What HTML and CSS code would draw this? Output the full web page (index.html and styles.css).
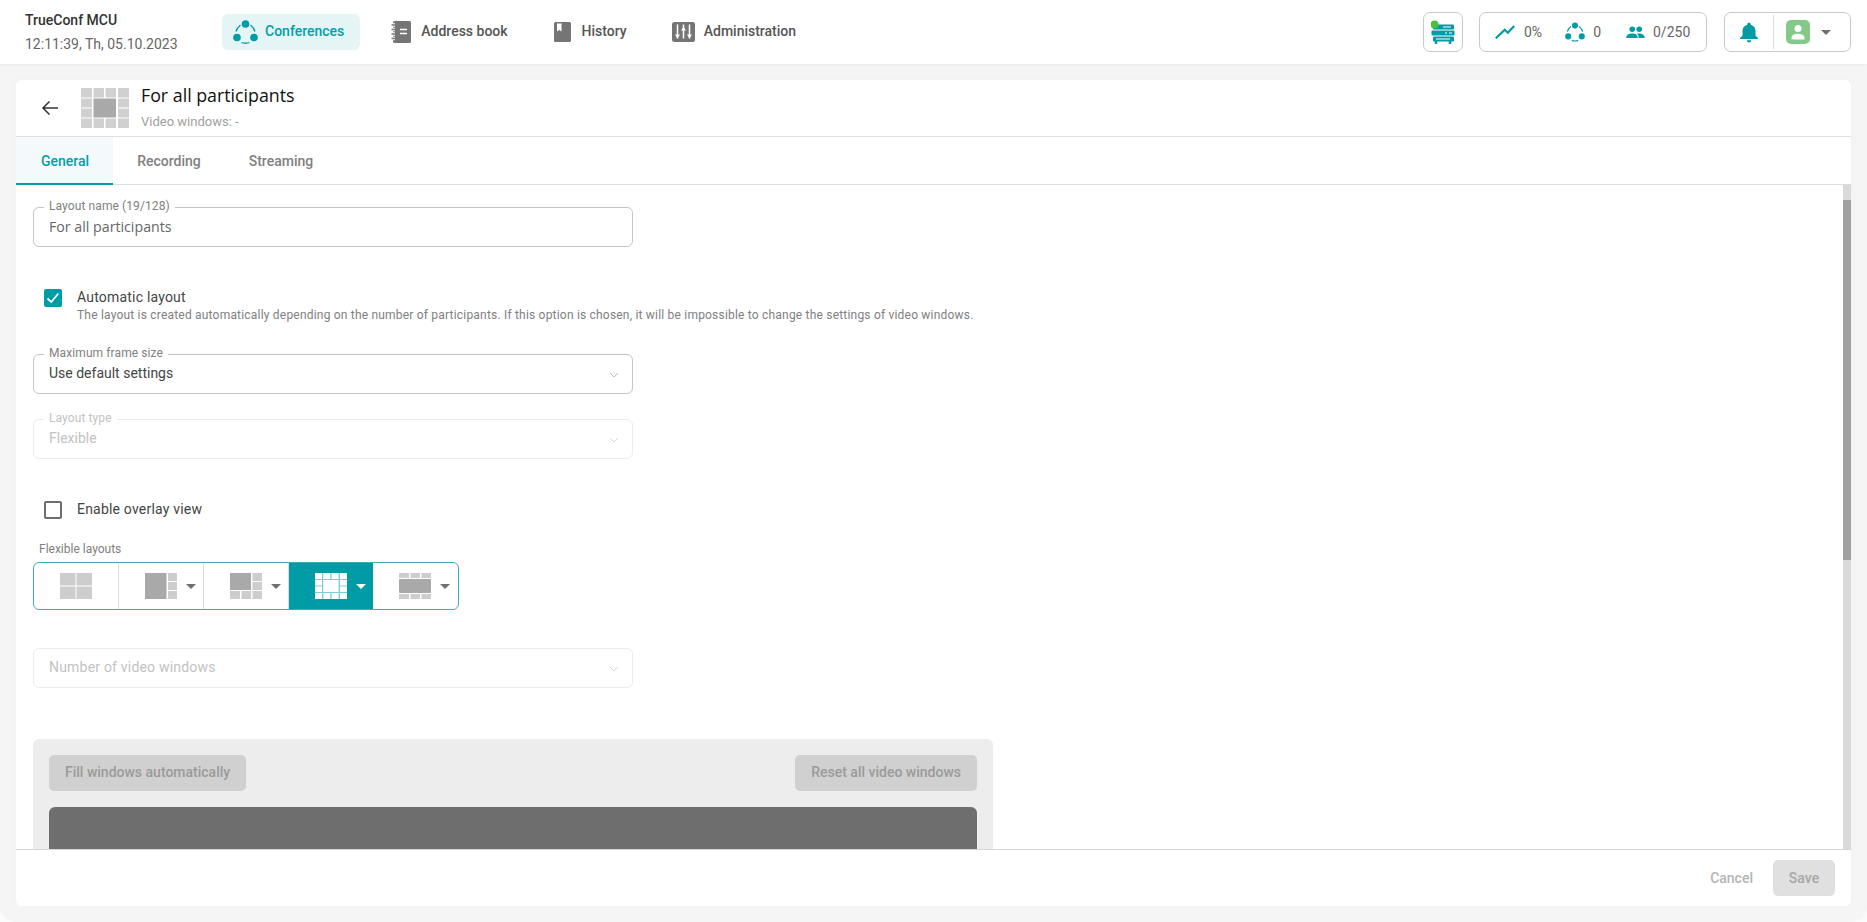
FILE: index.html
```html
<!DOCTYPE html>
<html lang="en">
<head>
<meta charset="utf-8">
<title>TrueConf MCU</title>
<link rel="stylesheet" href="styles.css">
</head>
<body>
<header class="topbar">
  <div class="brand">
    <div class="brand-name">TrueConf MCU</div>
    <div class="brand-time">12:11:39, Th, 05.10.2023</div>
  </div>
  <nav class="nav">
    <a class="nav-item active">
      <svg class="nav-icon icon-conf" width="25" height="24" viewBox="0 0 25 24"><circle cx="12.500" cy="4" r="3.800" fill="#009ca6"/><circle cx="4" cy="17.500" r="3.800" fill="#009ca6"/><circle cx="21" cy="17.500" r="3.800" fill="#009ca6"/><path d="M7.500 5Q3.800 8 3 11.500M17.500 5Q21.200 8 22 11.500M8.500 22.500Q12.500 24 16.500 22.500" fill="none" stroke="#009ca6" stroke-width="1.300"/></svg>
      <span class="nav-text">Conferences</span>
    </a>
    <a class="nav-item">
      <svg class="nav-icon icon-book" width="20" height="22" viewBox="0 0 20 22"><rect x="2" y="0" width="18" height="22" rx="1.500" fill="#757575"/><path d="M0 4h4M0 8.500h4M0 13h4M0 17.500h4" stroke="#fff" stroke-width="3.500"/><path d="M0.500 4h4M0.500 8.500h4M0.500 13h4M0.500 17.500h4" stroke="#757575" stroke-width="1.300"/><path d="M9 8.500h7M9 12.500h7" stroke="#fff" stroke-width="1.600"/></svg>
      <span class="nav-text">Address book</span>
    </a>
    <a class="nav-item nav-history">
      <svg class="nav-icon icon-hist" width="17" height="20" viewBox="0 0 17 20"><path d="M0 1.500A1.500 1.500 0 0 1 1.500 0h14A1.500 1.500 0 0 1 17 1.500v17a1.500 1.500 0 0 1-1.500 1.500h-14A1.500 1.500 0 0 1 0 18.500z" fill="#757575"/><path d="M3 1.500h4.500v8L5.250 8 3 9.500z" fill="#fff"/></svg>
      <span class="nav-text">History</span>
    </a>
    <a class="nav-item">
      <svg class="nav-icon icon-admin" width="23" height="20" viewBox="0 0 23 20"><rect width="23" height="20" rx="2.500" fill="#757575"/><path d="M5.500 2.500v14M11.500 2.500v14M17.500 2.500v14" stroke="#fff" stroke-width="1.500"/><path d="M3 12.500h5L5.500 16.500zM15 12.500h5L17.500 16.500zM9 8.500h5L11.500 4.500z" fill="#fff"/></svg>
      <span class="nav-text">Administration</span>
    </a>
  </nav>
  <div class="status">
    <div class="box box-server">
      <svg width="24" height="24" viewBox="0 0 24 24"><rect x="2" y="4.500" width="21" height="5" rx="1" fill="#009ca6"/><rect x="0.500" y="10.500" width="23" height="5" rx="1" fill="#009ca6"/><rect x="2" y="16.500" width="21" height="5" rx="1" fill="#009ca6"/><path d="M5 21v3M19 21v3" stroke="#009ca6" stroke-width="2.500"/><path d="M12 7h8M14 13h2M18 13h3M5 19h14" stroke="#fff" stroke-width="1.200"/><circle cx="3.500" cy="4.500" r="4" fill="#46c23c"/></svg>
    </div>
    <div class="box box-stats">
      <span class="stat stat-load">
        <svg width="20" height="14" viewBox="0 0 20 14"><path d="M.8 13.300l9-8.600 3 3L19.200 1" fill="none" stroke="#009ca6" stroke-width="2.200"/></svg>
        0%
      </span>
      <span class="stat">
        <svg width="20" height="20" viewBox="0 0 25 24"><circle cx="12.500" cy="4" r="3.800" fill="#009ca6"/><circle cx="4" cy="17.500" r="3.800" fill="#009ca6"/><circle cx="21" cy="17.500" r="3.800" fill="#009ca6"/><path d="M7.500 5Q3.800 8 3 11.500M17.500 5Q21.200 8 22 11.500M8.500 22.500Q12.500 24 16.500 22.500" fill="none" stroke="#009ca6" stroke-width="1.500"/></svg>
        0
      </span>
      <span class="stat stat-users">
        <svg width="19" height="13" viewBox="0 0 20 14"><circle cx="6.500" cy="3.500" r="3" fill="#009ca6"/><circle cx="14" cy="3.500" r="3" fill="#009ca6"/><path d="M0 13c0-3.500 3-5 6.500-5s6 1.500 6 5zM13.500 13c0-2-.5-3.500-2-4.700 4-1 8.500.5 8.500 4.700z" fill="#009ca6"/></svg>
        0/250
      </span>
    </div>
    <div class="box box-user">
      <svg class="bell" width="18" height="21" viewBox="0 0 18 21"><path d="M9 0.500a1.700 1.700 0 0 1 1.700 1.700v.6C13.800 3.600 15.500 6 15.500 9v4.500L18 16v1H0v-1l2.500-2.500V9c0-3 1.700-5.400 4.800-6.200v-.6A1.700 1.700 0 0 1 9 .5zM6.800 18.200h4.400a2.200 2.200 0 0 1-4.400 0z" fill="#009ca6"/></svg>
      <span class="divider"></span>
      <span class="avatar">
        <svg width="24" height="24" viewBox="0 0 24 24"><circle cx="12" cy="8.500" r="3.500" fill="#fff"/><path d="M5.500 19.500v-1.500C5.500 15 9 13.800 12 13.800s6.500 1.200 6.500 4.200v1.500z" fill="#fff"/></svg>
      </span>
      <span class="caret user-caret"></span>
    </div>
  </div>
</header>

<div class="page">
<main class="card">
  <div class="card-head">
    <svg class="back" width="18" height="16" viewBox="0 0 18 16"><path d="M17 8H2M8.500 1.500L2 8l6.500 6.500" fill="none" stroke="#333" stroke-width="1.500"/></svg>
    <svg class="head-icon" width="48" height="40" viewBox="0 0 48 40">
      <g fill="#d0d0d0">
        <rect x="0" y="0" width="11" height="9.500"/><rect x="12.500" y="0" width="10.500" height="9.500"/><rect x="24.500" y="0" width="10.500" height="9.500"/><rect x="37" y="0" width="11" height="9.500"/>
        <rect x="0" y="10.500" width="11" height="9"/><rect x="37" y="10.500" width="11" height="9"/>
        <rect x="0" y="20.500" width="11" height="9"/><rect x="37" y="20.500" width="11" height="9"/>
        <rect x="0" y="30.500" width="11" height="9.500"/><rect x="12.500" y="30.500" width="10.500" height="9.500"/><rect x="24.500" y="30.500" width="10.500" height="9.500"/><rect x="37" y="30.500" width="11" height="9.500"/>
      </g>
      <rect x="12.500" y="10.500" width="22.500" height="19" fill="#a9a9a9"/>
    </svg>
    <div class="head-text">
      <div class="head-title">For all participants</div>
      <div class="head-sub">Video windows: -</div>
    </div>
  </div>
  <div class="tabs">
    <div class="tab active">General</div>
    <div class="tab">Recording</div>
    <div class="tab">Streaming</div>
  </div>
  <div class="scroll-area">
    <div class="content">
      <div class="field">
        <span class="field-label">Layout name (19/128)</span>
        <span class="field-value value-name">For all participants</span>
      </div>

      <div class="check-row check-auto">
        <span class="check checked">
          <svg width="14" height="12" viewBox="0 0 14 12"><path d="M1.500 6.500l3.800 3.500 7-8.500" fill="none" stroke="#fff" stroke-width="1.700"/></svg>
        </span>
        <div>
          <div class="check-label">Automatic layout</div>
          <div class="check-hint">The layout is created automatically depending on the number of participants. If this option is chosen, it will be impossible to change the settings of video windows.</div>
        </div>
      </div>

      <div class="field field-frame">
        <span class="field-label">Maximum frame size</span>
        <span class="field-value">Use default settings</span>
        <svg class="chev" width="10" height="6" viewBox="0 0 10 6"><path d="M1 1l4 4 4-4" fill="none" stroke="#bdbdbd" stroke-width="1"/></svg>
      </div>

      <div class="field field-disabled field-type">
        <span class="field-label">Layout type</span>
        <span class="field-value">Flexible</span>
        <svg class="chev" width="10" height="6" viewBox="0 0 10 6"><path d="M1 1l4 4 4-4" fill="none" stroke="#d8d8d8" stroke-width="1"/></svg>
      </div>

      <div class="check-row check-overlay">
        <span class="check"></span>
        <div class="check-label">Enable overlay view</div>
      </div>

      <div class="flex-title">Flexible layouts</div>
      <div class="layouts">
        <div class="layout-btn">
          <svg width="32" height="26" viewBox="0 0 32 26"><g fill="#cdcdcd"><rect width="15.500" height="12.500"/><rect x="16.500" width="15.500" height="12.500"/><rect y="13.500" width="15.500" height="12.500"/><rect x="16.500" y="13.500" width="15.500" height="12.500"/></g></svg>
        </div>
        <div class="layout-btn">
          <svg width="32" height="26" viewBox="0 0 32 26"><rect width="21.500" height="26" fill="#a9a9a9"/><g fill="#cdcdcd"><rect x="23" width="9" height="8"/><rect x="23" y="9" width="9" height="8"/><rect x="23" y="18" width="9" height="8"/></g></svg>
          <span class="caret"></span>
        </div>
        <div class="layout-btn">
          <svg width="32" height="26" viewBox="0 0 32 26"><rect width="21" height="17" fill="#a9a9a9"/><g fill="#cdcdcd"><rect x="22.500" width="9.500" height="8"/><rect x="22.500" y="9" width="9.500" height="8"/><rect y="18" width="10" height="8"/><rect x="11.500" y="18" width="9.500" height="8"/><rect x="22.500" y="18" width="9.500" height="8"/></g></svg>
          <span class="caret"></span>
        </div>
        <div class="layout-btn selected">
          <svg width="32" height="26" viewBox="0 0 32 26"><rect width="32" height="26" fill="#80cdd2"/><g fill="#fff"><rect x="0" y="0" width="7" height="6"/><rect x="8.300" y="0" width="7" height="6"/><rect x="16.600" y="0" width="7" height="6"/><rect x="25" y="0" width="7" height="6"/><rect x="0" y="7" width="7" height="5.500"/><rect x="25" y="7" width="7" height="5.500"/><rect x="0" y="13.500" width="7" height="5.500"/><rect x="25" y="13.500" width="7" height="5.500"/><rect x="0" y="20" width="7" height="6"/><rect x="8.300" y="20" width="7" height="6"/><rect x="16.600" y="20" width="7" height="6"/><rect x="25" y="20" width="7" height="6"/><rect x="8.300" y="7" width="15.300" height="12"/></g></svg>
          <span class="caret caret-white"></span>
        </div>
        <div class="layout-btn last">
          <svg width="32" height="26" viewBox="0 0 32 26"><g fill="#cdcdcd"><rect width="10" height="5"/><rect x="11.500" width="9.500" height="5"/><rect x="22.500" width="9.500" height="5"/><rect y="21" width="10" height="5"/><rect x="11.500" y="21" width="9.500" height="5"/><rect x="22.500" y="21" width="9.500" height="5"/></g><rect y="6" width="32" height="14" rx="1" fill="#a9a9a9"/></svg>
          <span class="caret"></span>
        </div>
      </div>

      <div class="field field-disabled field-count">
        <span class="field-value">Number of video windows</span>
        <svg class="chev" width="10" height="6" viewBox="0 0 10 6"><path d="M1 1l4 4 4-4" fill="none" stroke="#d8d8d8" stroke-width="1"/></svg>
      </div>

      <section class="preview">
        <div class="preview-actions">
          <button class="ghost-btn">Fill windows automatically</button>
          <button class="ghost-btn">Reset all video windows</button>
        </div>
        <div class="stage"></div>
      </section>
    </div>
    <div class="scrollbar"><div class="thumb"></div></div>
  </div>
  <footer class="card-foot">
    <span class="cancel">Cancel</span>
    <span class="save">Save</span>
  </footer>
</main>
</div>
</body>
</html>
```

FILE: styles.css
```css
* { box-sizing: border-box; }
html, body { height: 100%; }
body {
  margin: 0;
  height: 922px;
  overflow: hidden;
  background: #fbfbfb;
  font-family: Roboto, "Liberation Sans", sans-serif;
  color: #333;
  display: flex;
  flex-direction: column;
}
.topbar {
  flex: none;
  position: relative;
  height: 64px;
  background: #fff;
  display: flex;
  align-items: center;
  padding: 0 16px 0 25px;
  box-shadow: 0 1px 3px rgba(0,0,0,.05);
}
.page {
  flex: 1;
  min-height: 0;
  padding: 16px 0 0 16px;
  background: #f5f5f5;
  border-radius: 0 0 16px 16px;
}
.brand { width: 197px; }
.brand-name { font-size: 14px; font-weight: 500; line-height: 16px; margin-bottom: 8px; }
.brand-time { font-size: 14px; line-height: 16px; color: #666; }
.nav { display: flex; align-items: center; gap: 17px; }
.nav-item {
  display: flex;
  align-items: center;
  height: 36px;
  padding: 0 16px 1px 11px;
  font-size: 14px;
  font-weight: 500;
  color: #555;
  border-radius: 6px;
}
.nav-text { padding-bottom: 1px; }
.nav-item.active { background: #e5f5f6; color: #00a0aa; margin-right: 3px; }
.nav-history { margin: 0 1px 0 2px; }
.nav-icon { flex: none; }
.icon-conf { margin-right: 7px; }
.icon-book { margin-right: 10px; }
.icon-hist { margin-right: 11px; }
.icon-admin { margin-right: 9px; }
.status { margin-left: auto; display: flex; align-items: center; }
.box {
  height: 40px;
  border: 1px solid #c9c9c9;
  border-radius: 7px;
  display: flex;
  align-items: center;
  background: #fff;
}
.box-server { width: 40px; justify-content: center; margin-right: 16px; }
.box-stats { width: 228px; padding: 0 15px; margin-right: 17px; gap: 24px; }
.stat { display: flex; align-items: center; font-size: 14px; color: #666; gap: 8px; }
.stat-load { gap: 9px; margin-right: -1px; }
.stat-users { margin-left: 1px; }
.box-user { width: 127px; padding-left: 15px; }
.divider { width: 1px; height: 34px; background: #ddd; margin: 0 12px 0 15px; }
.avatar {
  width: 24px; height: 24px;
  border-radius: 5px;
  background: #84c987;
  display: flex;
}
.caret {
  width: 0; height: 0;
  border-left: 5px solid transparent;
  border-right: 5px solid transparent;
  border-top: 5px solid #707070;
}
.user-caret { margin-left: 11px; }
.caret-white { border-top-color: #fff; }

.card {
  width: 1835px;
  height: 826px;
  background: #fff;
  border-radius: 6px;
  box-shadow: 0 0 10px 2px rgba(0,0,0,.015);
  display: flex;
  flex-direction: column;
  overflow: hidden;
}
.card-head {
  flex: none;
  height: 57px;
  display: flex;
  align-items: center;
  padding-left: 25px;
  border-bottom: 1px solid #e0e0e0;
}
.back { margin-right: 22px; }
.head-icon { margin-right: 12px; }
.head-title { font-family: "Open Sans", Roboto, sans-serif; font-size: 17.800px; line-height: 22px; color: #111; margin-top: -4px; }
.head-sub { font-size: 13px; line-height: 14px; color: #a0a0a0; margin-top: 9px; }
.tabs {
  flex: none;
  height: 48px;
  display: flex;
  border-bottom: 1px solid #dcdcdc;
}
.tab {
  padding: 16px 24px 0;
  font-size: 14px;
  font-weight: 500;
  color: #808080;
}
.tab.active { padding-left: 25px; background: #f4fafc; color: #00a0aa; border-bottom: 2px solid #009ca6; height: 48px; }
.scroll-area { flex: 1; min-height: 0; display: flex; }
.content { flex: 1; min-width: 0; overflow: hidden; padding: 22px 0 0 17px; }
.scrollbar { flex: none; width: 8px; background: #d9d9d9; padding-top: 15px; }
.thumb { height: 360px; background: #a0a0a0; }

.field {
  position: relative;
  width: 600px;
  height: 40px;
  border: 1px solid #c4c4c4;
  border-radius: 6px;
  display: flex;
  align-items: center;
  padding-left: 15px;
}
.field-label {
  position: absolute;
  left: 10px;
  top: -9px;
  padding: 0 5px;
  background: #fff;
  font-size: 12px;
  letter-spacing: .1px;
  line-height: 14px;
  color: #808080;
}
.field-value { font-size: 14px; color: #444; padding-bottom: 2px; }
.value-name { font-family: "Open Sans", Roboto, sans-serif; font-size: 14.200px; color: #666; }
.chev { position: absolute; right: 13px; top: 17px; }
.field-disabled { border-color: #ececec; }
.field-disabled .field-label, .field-disabled .field-value { color: #c2c2c2; }
.check-row { display: flex; }
.check-auto { margin: 41px 0 0 11px; }
.check {
  width: 18px; height: 18px;
  flex: none;
  border: 2px solid #6e6e6e;
  border-radius: 2px;
  margin-right: 15px;
  margin-top: 1px;
  display: flex; align-items: center; justify-content: center;
}
.check.checked { background: #009ca6; border-color: #009ca6; }
.check-label { font-size: 14px; letter-spacing: .2px; line-height: 18px; color: #444; }
.check-hint { font-size: 12px; letter-spacing: .2px; line-height: 14px; color: #808080; margin-top: 2px; white-space: nowrap; }
.field-frame { margin-top: 32px; }
.field-type { margin-top: 25px; }
.check-overlay { margin: 41px 0 0 11px; }
.flex-title { font-size: 12px; line-height: 14px; color: #808080; margin: 23px 0 0 6px; }
.layouts {
  display: flex;
  width: 426px;
  height: 48px;
  margin-top: 6px;
  border: 1px solid #3dadb4;
  border-radius: 6px;
  overflow: hidden;
}
.layout-btn {
  width: 85px;
  display: flex;
  align-items: center;
  padding-left: 26px;
  border-right: 1px solid #ddd;
  gap: 9px;
}
.layout-btn.selected { width: 84px; background: #009ca6; border-right-color: #009ca6; }
.layout-btn.last { border-right: 0; flex: 1; }
.field-count { margin-top: 38px; }
.field-count .field-value { letter-spacing: .2px; }
.preview {
  width: 960px;
  height: 400px;
  margin-top: 51px;
  background: #ededed;
  border-radius: 6px;
  padding: 16px;
}
.preview-actions { display: flex; justify-content: space-between; }
.ghost-btn {
  height: 36px;
  padding: 0 16px 2px;
  border: 0;
  border-radius: 5px;
  background: #d0d0d0;
  color: #9a9a9a;
  font: 500 14px Roboto, "Liberation Sans", sans-serif;
}
.stage { height: 200px; margin-top: 16px; background: #6e6e6e; border-radius: 6px; }
.card-foot {
  flex: none;
  height: 57px;
  border-top: 1px solid #d6d6d6;
  display: flex;
  align-items: center;
  justify-content: flex-end;
  padding-right: 16px;
  background: #fff;
}
.cancel { font-size: 14px; font-weight: 500; color: #b5b5b5; margin-right: 20px; }
.save {
  width: 62px; height: 36px;
  background: #e0e0e0;
  border-radius: 5px;
  font-size: 14px; font-weight: 500;
  color: #a8a8a8;
  display: flex; align-items: center; justify-content: center;
}
```
